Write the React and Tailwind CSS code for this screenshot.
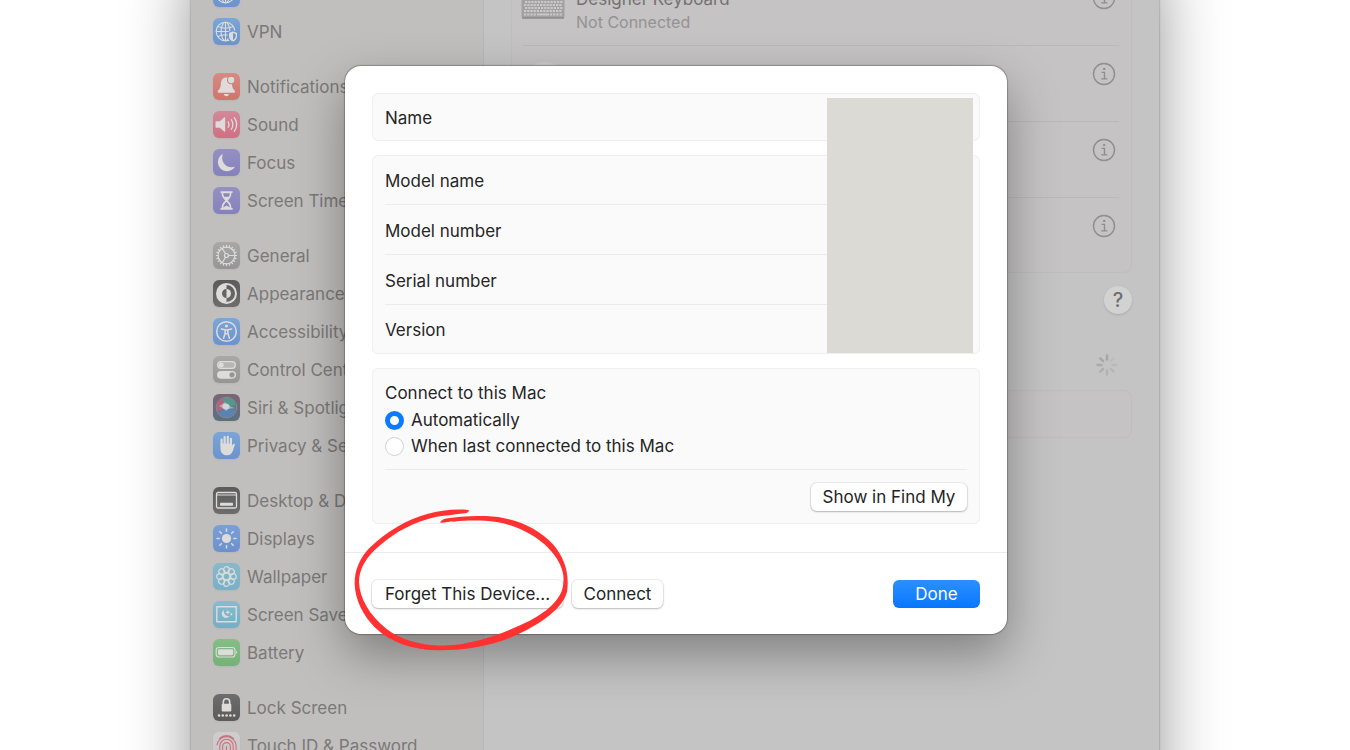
import { useState } from "react";

const glyph = "#dddcdb";
const line = {
    fill: "none",
    stroke: glyph,
    strokeWidth: 1.3,
    strokeLinecap: "round",
    strokeLinejoin: "round",
};

const turns = (n) => Array.from({ length: n }, (_, i) => (i * 360) / n);

const Globe = () => (
    <g {...line} strokeWidth="1.1">
        <circle cx="12.5" cy="13.5" r="9.3" />
        <ellipse cx="12.5" cy="13.5" rx="4.4" ry="9.3" />
        <path d="M12.5 4.2v18.6M3.2 13.5h18.6M4.9 8.6c4.5 2 10.7 2 15.2 0M4.9 18.4c4.5-2 10.7-2 15.2 0" />
    </g>
);

const icons = {
    network: <Globe />,
    vpn: (
        <>
            <Globe />
            <path d="M20 12.6l4.6 1.8v3.8c0 2.800-1.800 4.800-4.600 6-2.800-1.200-4.600-3.200-4.600-6v-3.800z" fill={glyph} stroke="#6f98d0" strokeWidth="1.2" />
            <path d="M20 15v7c1.700-1 2.700-2.200 2.700-4v-2z" fill="#6f98d0" />
        </>
    ),
    bell: (
        <>
            <path d="M13.3 4.500c-3.600 0-5.200 2.700-5.400 6.200-.2 3.600-.9 5-2.700 6.800-.9.900-.6 2.200.8 2.200h14.800c1.400 0 1.700-1.300.8-2.200-1.800-1.800-2.500-3.200-2.700-6.800-.2-3.500-2-6.200-5.600-6.200z" fill={glyph} />
            <path d="M10.800 21h5.200c-.4 1.500-1.300 2.200-2.600 2.200s-2.200-.7-2.600-2.200z" fill={glyph} />
            <circle cx="18.2" cy="7" r="3.7" fill={glyph} stroke="#d17f77" strokeWidth="1.1" />
        </>
    ),
    sound: (
        <>
            <path d="M3.500 10.300h3.300l4.400-3.800c.5-.4 1-.2 1 .5v13c0 .7-.5.900-1 .5l-4.400-3.800H3.500c-.6 0-1-.4-1-1v-4.400c0-.6.4-1 1-1z" fill={glyph} />
            <path d="M15.200 10.800c1 1.700 1 3.700 0 5.400M18.300 8.700c2 3 2 6.600 0 9.600M21.300 6.700c3 4.200 3 9.400 0 13.600" {...line} />
        </>
    ),
    moon: <path d="M9.800 4.800c-3 1.600-4.900 4.700-4.900 8.200 0 5.100 4.100 9.200 9.200 9.200 3.500 0 6.400-1.800 8-4.600-1.200.5-2.400.7-3.700.7-5.100 0-9.200-4.100-9.200-9.200 0-1.500.2-2.900.6-4.300z" fill={glyph} />,
    hourglass: (
        <>
            <path d="M8.200 4.200h10.600c.6 0 1 .4 1 .9s-.4.900-1 .9h-.4c0 3.300-1.200 5.200-3.700 7.500 2.500 2.300 3.700 4.200 3.700 7.500h.4c.6 0 1 .4 1 .9s-.4.900-1 .9H8.200c-.6 0-1-.4-1-.9s.4-.9 1-.9h.4c0-3.300 1.200-5.200 3.700-7.500C9.800 11.200 8.600 9.300 8.600 6h-.4c-.6 0-1-.4-1-.9s.4-.9 1-.9z" fill={glyph} />
            <path d="M10.200 6.200h6.600c-.1 1.500-.5 2.600-1 3.500h-4.600c-.5-.9-.9-2-1-3.500zM13.500 14.800c1.800 1.400 3 3.500 3.200 5.700l-3.200-2-3.200 2c.2-2.200 1.400-4.300 3.200-5.700z" fill="#8a86bb" />
        </>
    ),
    gear: (
        <g {...line} strokeWidth="1.2">
            <circle cx="13.5" cy="13.5" r="8.400" />
            <circle cx="13.5" cy="13.5" r="2" />
            <path d="M15.500 13.500h6.400M12.500 11.800L9.200 6.300M12.500 15.200l-3.300 5.500" />
            {turns(20).map((a) => (
                <path key={a} d="M13.500 3.400v1.500" transform={`rotate(${a} 13.5 13.5)`} />
            ))}
        </g>
    ),
    appearance: (
        <>
            <circle cx="13.5" cy="13.5" r="9.5" fill="none" stroke={glyph} strokeWidth="2" />
            <path d="M13.500 4a9.500 9.500 0 000 19v-5a4.500 4.500 0 010-9z" fill={glyph} />
            <path d="M13.500 9a4.500 4.500 0 010 9z" fill={glyph} />
        </>
    ),
    accessibility: (
        <>
            <circle cx="13.5" cy="13.5" r="9.8" {...line} strokeWidth="1.5" />
            <circle cx="13.5" cy="8" r="1.6" fill={glyph} />
            <path d="M8.300 11l3.800.8v3.400l-1.500 5M18.700 11l-3.800.8v3.400l1.500 5M12.200 12h2.600v3.800h-2.600z" {...line} strokeWidth="1.5" />
        </>
    ),
    control: (
        <>
            <rect x="4.700" y="5.700" width="17.6" height="6.600" rx="3.300" fill="#b7b6b5" stroke={glyph} strokeWidth="1.3" />
            <circle cx="8.200" cy="9" r="2.500" fill={glyph} />
            <rect x="4" y="15" width="19" height="7.700" rx="3.850" fill={glyph} />
            <circle cx="19" cy="18.850" r="2.600" fill="#969594" />
        </>
    ),
    siri: (
        <>
            <circle cx="13.5" cy="13.5" r="10.300" fill="#5c7c91" stroke="#8b9299" strokeWidth=".8" />
            <path d="M4 10a10 10 0 0113-5.500c-3 2-3 5-3.500 8.500-3 1-6 5-9 4a10 10 0 01-.5-7z" fill="#b2647c" />
            <path d="M9 5c6-3 12 0 14 5-3 3-7 2-9.500 3.500C12 10 11 8 9 5z" fill="#57968a" />
            <path d="M5 18c4 1 6-3 8.500-4.500C16 17 20 15 23 16c-3 8-13 10-18 2z" fill="#5a83b4" />
            <path d="M6 12c3-1 4-3 6-4 2 3 5 5 10 6-5 1-6 0-9 3-1-2-4-3-7-5z" fill="#c3d2d6" opacity=".6" />
            <ellipse cx="13" cy="12.500" rx="3.500" ry="3" fill="#e0e6e6" opacity=".7" />
        </>
    ),
    hand: (
        <>
            <path d="M8.600 13V7.600M11.600 12V5M14.800 12V4.800M17.900 13V6.800" {...line} strokeWidth="2.2" />
            <path d="M7.500 11.500h11.500v2l1.200-1.400c.7-.8 2-.3 1.600.8l-2 6c-.9 2.700-2.900 4.400-5.700 4.400-4 0-6.600-2.600-6.600-6.600z" fill={glyph} />
        </>
    ),
    desktop: (
        <>
            <rect x="3.500" y="5.500" width="20" height="15.500" rx="1.500" {...line} />
            <path d="M4 8h19" {...line} strokeWidth="1" />
            <rect x="7" y="15.700" width="13" height="3" rx=".8" fill={glyph} />
        </>
    ),
    sun: (
        <>
            <circle cx="13.5" cy="13.5" r="4.600" fill={glyph} />
            {turns(8).map((a) => (
                <path key={a} d="M13.500 4v2.200" {...line} strokeWidth="1.5" transform={`rotate(${a} 13.5 13.5)`} />
            ))}
        </>
    ),
    flower: (
        <g {...line} strokeWidth="1.2">
            {turns(8).map((a) => (
                <circle key={a} cx="13.5" cy="6.600" r="2.900" transform={`rotate(${a} 13.5 13.5)`} />
            ))}
            <circle cx="13.5" cy="13.5" r="3.400" />
        </g>
    ),
    saver: (
        <>
            <rect x="3.800" y="5.800" width="19.400" height="14.900" {...line} strokeWidth="1.4" />
            <path d="M11 9a4.200 4.200 0 105.500 6c-4 .6-6.300-2.300-5.500-6z" fill={glyph} />
            <path d="M14.800 8.700l.7 1.800 1.800.7-1.800.7-.7 1.800-.7-1.800-1.800-.7 1.800-.7zM18.300 11.500l.5 1.200 1.200.5-1.200.5-.5 1.200-.5-1.200-1.200-.5 1.200-.5z" fill={glyph} />
        </>
    ),
    battery: (
        <>
            <rect x="3.200" y="8.500" width="18.800" height="9.500" rx="2.800" {...line} strokeWidth="1.1" />
            <rect x="5" y="10.300" width="15.200" height="5.900" rx="1.400" fill={glyph} />
            <path d="M23.200 11.500c1.200.5 1.200 3 0 3.500z" fill={glyph} />
        </>
    ),
    lock: (
        <>
            <path d="M10.300 10.500V8a3.200 3.200 0 016.400 0v2.500" {...line} strokeWidth="1.6" />
            <rect x="8.700" y="9.800" width="9.600" height="7.600" rx="1.200" fill={glyph} />
            {[6, 9.8, 13.6, 17.4, 21.2].map((x) => (
                <circle key={x} cx={x} cy="21.500" r="1.300" fill={glyph} />
            ))}
        </>
    ),
    finger: (
        <g {...line} stroke="#c9737f" strokeWidth="1.1">
            <path d="M6.500 6.500a10 10 0 0114 0M4 13a9.600 9.600 0 0119 0c.3 3 .2 5-.5 8M6.500 20c.5-2 .3-4 .3-6a6.700 6.700 0 0113.400 0c0 3 0 5-.8 8M9.300 22c.5-3 .3-5 .3-7.500a3.900 3.900 0 017.800 0c0 3 0 5-.7 8M13.500 14.500c0 3 0 5.500-.8 8" />
        </g>
    ),
};

const groups = [
    [
        { name: "Network", icon: "network", bg: "from-[#7ba6d6] to-[#6b93cf]" },
        { name: "VPN", icon: "vpn", bg: "from-[#7ba6d6] to-[#6b93cf]" },
    ],
    [
        { name: "Notifications", icon: "bell", bg: "from-[#d68b84] to-[#cf756c]" },
        { name: "Sound", icon: "sound", bg: "from-[#d2899a] to-[#cf6f82]" },
        { name: "Focus", icon: "moon", bg: "from-[#9590c3] to-[#8581bb]" },
        { name: "Screen Time", icon: "hourglass", bg: "from-[#9590c3] to-[#8581bb]" },
    ],
    [
        { name: "General", icon: "gear", bg: "from-[#a9a8a8] to-[#969595]" },
        { name: "Appearance", icon: "appearance", bg: "from-[#5c5b5b] to-[#6e6d6d]" },
        { name: "Accessibility", icon: "accessibility", bg: "from-[#7ba6d6] to-[#6b93cf]" },
        { name: "Control Center", icon: "control", bg: "from-[#a9a8a8] to-[#969595]" },
        { name: "Siri & Spotlight", icon: "siri", bg: "from-[#7c6474] to-[#5a7080]" },
        { name: "Privacy & Security", icon: "hand", bg: "from-[#7ba6d6] to-[#6b93cf]" },
    ],
    [
        { name: "Desktop & Dock", icon: "desktop", bg: "from-[#5c5b5b] to-[#6e6d6d]" },
        { name: "Displays", icon: "sun", bg: "from-[#7ba0d6] to-[#6b90cf]" },
        { name: "Wallpaper", icon: "flower", bg: "from-[#87b9c9] to-[#79b0c8]" },
        { name: "Screen Saver", icon: "saver", bg: "from-[#87bccd] to-[#75adc8]" },
        { name: "Battery", icon: "battery", bg: "from-[#86bd87] to-[#74b277]" },
    ],
    [
        { name: "Lock Screen", icon: "lock", bg: "from-[#6e6d6d] to-[#5c5b5b]" },
        { name: "Touch ID & Password", icon: "finger", bg: "from-[#cfcdcd] to-[#c8c6c6]" },
    ],
];

function Sidebar() {
    return (
        <nav className="w-[293px] shrink-0 border-r border-[#b8b7b6] bg-[#c1bfbd] pl-[22px]">
            {/* the list is scrolled, so its first row is cut off */}
            <div className="-mt-[26px] flex flex-col gap-[17px]">
                {groups.map((group, i) => (
                    <ul key={i}>
                        {group.map((item) => (
                            <li key={item.name}>
                                <a href="#" className="flex h-[38px] items-center gap-[7px] whitespace-nowrap">
                                    <span className={`size-[27px] shrink-0 rounded-md bg-linear-to-b shadow-xs ${item.bg}`}>
                                        <svg viewBox="0 0 27 27" className="size-full">
                                            {icons[item.icon]}
                                        </svg>
                                    </span>
                                    <span className="pt-0.5">{item.name}</span>
                                </a>
                            </li>
                        ))}
                    </ul>
                ))}
            </div>
        </nav>
    );
}

function InfoButton() {
    return (
        <button aria-label="Info" className="mr-[3px] size-6">
            <svg viewBox="0 0 24 24" className="size-full" fill="none" stroke="#8f8d8e" strokeWidth="1.4">
                <circle cx="12" cy="12" r="10.500" />
                <path d="M9.500 10.400h3v6.500M9.200 16.900h6.200" />
                <circle cx="12.2" cy="6.900" r="1.200" fill="#8f8d8e" stroke="none" />
            </svg>
        </button>
    );
}

function KeyboardPicture() {
    return (
        <svg viewBox="0 0 44 38" className="-ml-0.5 h-[38px] w-11">
            <rect x=".5" y="4" width="43" height="33" rx="2" fill="#a3a2a2" />
            <path d="M1 37h42" stroke="#8c8b8b" strokeWidth="1.5" />
            {[9, 13, 17, 21, 24, 27, 30].map((y, i) => (
                <path key={y} d={`M${3 + (i % 2)} ${y}h38`} stroke="#cccaca" strokeWidth="1.8" strokeDasharray="2.2 1" />
            ))}
            <path d="M3 33.500h12M29 33.500h12" stroke="#cccaca" strokeWidth="1.8" strokeDasharray="2.2 1" />
            <path d="M16 33.500h12" stroke="#cccaca" strokeWidth="1.8" />
        </svg>
    );
}

function DeviceList() {
    return (
        <main className="min-w-0 flex-1 bg-[#c5c4c4] pr-[27px] pl-[27px]">
            <ul className="-mt-[31px] rounded-b-lg border border-[#bfbdbd] bg-[#c5c3c3] pr-3 pl-[11px]">
                <li className="flex h-[76px] gap-[11px] border-b border-[#bab8b8] pt-[11px]">
                    <KeyboardPicture />
                    <div className="flex-1 pt-[6px]">
                        <p className="leading-6 text-[#737172]">Designer Keyboard</p>
                        <p className="text-base leading-[22px] text-[#949293]">Not Connected</p>
                    </div>
                    <div className="pt-[5px]">
                        <InfoButton />
                    </div>
                </li>
                <li className="flex h-[76px] items-start justify-between border-b border-[#bab8b8] pt-4">
                    <span className="size-11 rounded-full bg-[#cccbcb]" />
                    <InfoButton />
                </li>
                <li className="flex h-[76px] items-start justify-end border-b border-[#bab8b8] pt-4">
                    <InfoButton />
                </li>
                <li className="flex h-[74px] items-start justify-end pt-4">
                    <InfoButton />
                </li>
            </ul>
            <div className="flex justify-end pt-[13px]">
                <button className="size-7 rounded-full bg-[#d3d2d2] text-xl leading-7 font-medium text-[#6f6d6e] shadow">?</button>
            </div>
            <div className="flex justify-end pt-10 pr-[14px]">
                <svg viewBox="0 0 22 22" className="size-[22px]" stroke="#a5a2a2" strokeWidth="2.4" strokeLinecap="round">
                    {turns(8).map((a, i) => (
                        <path key={a} d="M11 1.500v4" opacity={i === 0 ? 0.9 : 0.1 + i * 0.11} transform={`rotate(${a} 11 11)`} />
                    ))}
                </svg>
            </div>
            <div className="mt-[14px] h-12 rounded-lg border border-[#bfbdbd] bg-[#c5c3c3]" />
        </main>
    );
}

const card = "rounded-md border border-[#efefef] bg-[#fafafa] px-3";
const plainButton =
    "h-7 rounded-md bg-white text-[#242424] shadow-[0_0_1px_1px_rgba(0,0,0,0.07),0_1px_2px_rgba(0,0,0,0.22)]";

function Radio({ label, value, selected, onSelect }) {
    return (
        <label className="flex h-[26px] items-center gap-[7px]">
            <input
                type="radio"
                name="connect"
                value={value}
                checked={selected}
                onChange={() => onSelect(value)}
                className="size-[19px] appearance-none rounded-full border border-[#d2d2d2] bg-white checked:border-[5px] checked:border-[#0a7bff]"
            />
            {label}
        </label>
    );
}

function Scribble() {
    return (
        <svg viewBox="40 50 651 435" className="pointer-events-none absolute top-[441px] left-2 h-[145px] w-[217px]">
            <path
                fill="#ff3131"
                d="M386 59C340 55 300 62 265 70C200 87 140 124 90 172C60 203 44 240 45 282C47 330 70 375 105 411C150 456 220 480 300 480C380 480 450 466 510 443C580 414 668 362 682 305C690 250 675 203 640 162C595 112 520 80 440 77C390 76 345 80 315 85C308 87 301 94 302 97C322 96 322 94 326 95L334 93L342 94C390 89 430 90 470 95C530 104 590 137 625 172C660 207 675 245 671 275C671 320 630 360 570 391C500 426 420 455 340 464C260 470 190 453 140 415C90 375 60 325 58 275C58 240 75 209 105 179C150 137 200 105 265 86C300 76 340 74 375 69C385 67 391 61 386 59Z"
            />
        </svg>
    );
}

function DeviceDialog() {
    const [mode, setMode] = useState("auto");

    return (
        <div
            role="dialog"
            aria-label="Device details"
            className="relative w-[662px] rounded-2xl bg-white text-[#262626] shadow-[0_0_1px_1px_rgba(0,0,0,0.25),0_20px_50px_rgba(0,0,0,0.35)]"
        >
            <div className="flex flex-col gap-[14px] px-[27px] pt-[27px] pb-7">
                <div className={`${card} flex h-12 items-center pt-0.5`}>Name</div>
                <ul className={card}>
                    {["Model name", "Model number", "Serial number", "Version"].map((row) => (
                        <li
                            key={row}
                            className="flex h-[50px] items-center border-b border-[#ebebeb] pt-0.5 first:h-[49px] last:h-[48px] last:border-0"
                        >
                            {row}
                        </li>
                    ))}
                </ul>
                <div className={card}>
                    <fieldset className="border-b border-[#ebebeb] pb-[10px]">
                        <legend className="pt-[11px] pb-px leading-[26px]">Connect to this Mac</legend>
                        <Radio label="Automatically" value="auto" selected={mode === "auto"} onSelect={setMode} />
                        <Radio label="When last connected to this Mac" value="last" selected={mode === "last"} onSelect={setMode} />
                    </fieldset>
                    <div className="flex justify-end pt-[13px] pb-3">
                        <button className={`${plainButton} w-[156px]`}>Show in Find My</button>
                    </div>
                </div>
            </div>

            <div className="flex items-center gap-[9px] border-t border-[#ececec] px-[27px] pt-[27px] pb-[26px]">
                <button className={`${plainButton} w-[191px]`}>Forget This Device...</button>
                <button className={`${plainButton} w-[91px]`}>Connect</button>
                <button className="ml-auto h-7 w-[87px] rounded-md bg-linear-to-b from-[#2a8fff] to-[#0577ff] text-white">Done</button>
            </div>

            {/* covers the device's own values */}
            <div className="absolute top-8 right-[34px] h-[255px] w-[146px] bg-[#dbdad5]" />
            <Scribble />
        </div>
    );
}

export default function App() {
    return (
        <div className="relative flex h-screen justify-center overflow-hidden bg-white font-[Inter,sans-serif] text-[17px] leading-[26px]">
            {/* the window runs past the top and bottom of the view */}
            <div className="-mt-8 -mb-24 flex w-full max-w-[968px] overflow-hidden bg-[#c5c4c4] pt-8 text-[#7a7978] shadow-[0_0_2px_rgba(0,0,0,0.4),0_0_60px_rgba(0,0,0,0.42)]">
                <Sidebar />
                <DeviceList />
            </div>
            <div className="absolute inset-0 flex items-start justify-center pt-[66px] pl-0.5">
                <DeviceDialog />
            </div>
        </div>
    );
}
